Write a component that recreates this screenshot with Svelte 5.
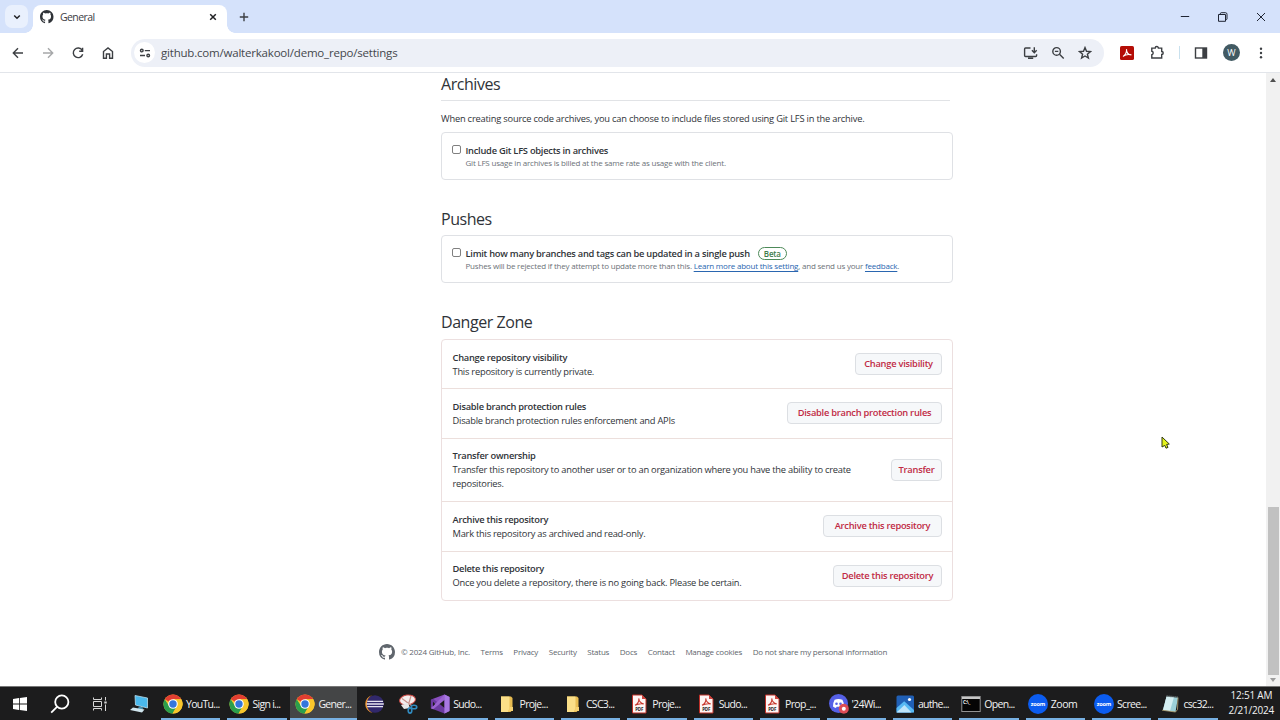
<script>
	const dangerRows = [
		{
			title: 'Change repository visibility',
			text: 'This repository is currently private.',
			button: 'Change visibility',
			width: 87,
		},
		{
			title: 'Disable branch protection rules',
			text: 'Disable branch protection rules enforcement and APIs',
			button: 'Disable branch protection rules',
			width: 155,
		},
		{
			title: 'Transfer ownership',
			text: 'Transfer this repository to another user or to an organization where you have the ability to create repositories.',
			button: 'Transfer',
			width: 51,
		},
		{
			title: 'Archive this repository',
			text: 'Mark this repository as archived and read-only.',
			button: 'Archive this repository',
			width: 119,
		},
		{
			title: 'Delete this repository',
			text: 'Once you delete a repository, there is no going back. Please be certain.',
			button: 'Delete this repository',
			width: 109,
		},
	];

	const footerLinks = [
		'Terms',
		'Privacy',
		'Security',
		'Status',
		'Docs',
		'Contact',
		'Manage cookies',
		'Do not share my personal information',
	];

	const browserTasks = [
		{ icon: 'chrome', label: 'YouTu...' },
		{ icon: 'chrome', label: 'Sign i...' },
		{ icon: 'chrome', label: 'Gener...', active: true },
	];

	const tasks = [
		{ icon: 'vs', label: 'Sudo...' },
		{ icon: 'folder', label: 'Proje...' },
		{ icon: 'folder', label: 'CSC3...' },
		{ icon: 'pdf', label: 'Proje...' },
		{ icon: 'pdf', label: 'Sudo...' },
		{ icon: 'pdf', label: 'Prop_...' },
		{ icon: 'discord', label: "'24Wi..." },
		{ icon: 'photos', label: 'authe...' },
		{ icon: 'cmd', label: 'Open...' },
		{ icon: 'zoom', label: 'Zoom' },
		{ icon: 'zoom', label: 'Scree...' },
		{ icon: 'notepad', label: 'csc32...' },
	];
</script>

{#snippet github(size)}
	<svg width={size} height={size} viewBox="0 0 16 16" fill="currentColor">
		<path
			d="M8 0c4.42 0 8 3.58 8 8a8.013 8.013 0 0 1-5.45 7.59c-.4.08-.55-.17-.55-.38 0-.27.01-1.13.01-2.2 0-.75-.25-1.23-.54-1.48 1.78-.2 3.65-.88 3.65-3.95 0-.88-.31-1.59-.82-2.15.08-.2.36-1.02-.08-2.12 0 0-.67-.22-2.2.82-.64-.18-1.32-.27-2-.27-.68 0-1.36.09-2 .27-1.53-1.03-2.2-.82-2.2-.82-.44 1.1-.16 1.92-.08 2.12-.51.56-.82 1.28-.82 2.15 0 3.06 1.86 3.75 3.64 3.95-.23.2-.44.55-.51 1.07-.46.21-1.61.55-2.33-.66-.15-.24-.6-.83-1.23-.82-.67.01-.27.38.01.53.34.19.73.9.82 1.13.16.45.68 1.31 2.69.94 0 .67.01 1.3.01 1.49 0 .21-.15.45-.55.38A7.995 7.995 0 0 1 0 8c0-4.42 3.58-8 8-8Z"
		/>
	</svg>
{/snippet}

{#snippet taskIcon(name)}
	<svg width="20" height="20" viewBox="0 0 20 20">
		{#if name === 'chrome'}
			<circle cx="10" cy="10" r="9.6" fill="#f8c62c" />
			<path d="M10 10L1.7 5.2A9.6 9.6 0 0 1 18.3 5.2L10 5.6z" fill="#e23e31" />
			<path d="M1.7 5.2A9.6 9.6 0 0 0 9.6 19.6L13.8 12.2L10 10L6.2 12.2z" fill="#2b9f4c" />
			<path d="M18.3 5.2H10L13.9 12.2L9.6 19.6A9.6 9.6 0 0 0 18.3 5.2z" fill="#f8c62c" />
			<circle cx="10" cy="10" r="4.8" fill="#fff" />
			<circle cx="10" cy="10" r="3.7" fill="#3476dc" />
		{:else if name === 'vs'}
			<path d="M14.5 0.5L19.5 3V17L14.5 19.5L1.5 8.6V5.6L3.2 4.8z" fill="#8a4fc0" />
			<path d="M14.5 19.5L0.8 14.2V5.8L3.2 4.8L14.5 14z" fill="#6b3aa0" />
			<path d="M3.2 15.2L0.8 14.2L14.5 0.5V6z" fill="#9a63d0" />
			<path d="M14.5 6L9.6 10L14.5 14zM3 7.8V12.2L5.1 10z" fill="#1c1c1d" />
			<path d="M14.5 0.5L19.5 3V17L14.5 19.5z" fill="#a878e2" />
		{:else if name === 'folder'}
			<path d="M4 2.5H14L15.5 4V16L13.5 18H4z" fill="#e9bd52" />
			<path d="M4 2.5H12.5V14L11 18H4z" fill="#fbdf88" />
			<path d="M12.5 13H16V17H12z" fill="#f6d273" />
		{:else if name === 'pdf'}
			<path d="M3.5 1H13L17 5V19H3.5z" fill="#fff5f4" stroke="#bd3029" stroke-width="1" />
			<path d="M13 1V5H17z" fill="#ca4740" />
			<path
				d="M6 11.3C8 10.3 10 7.6 9.9 4.4C9.7 7 11.8 9.5 14.7 9.9C11.5 9.4 8.5 10 6 11.3z"
				fill="none"
				stroke="#c8352c"
				stroke-width="1.1"
			/>
			<text x="10.2" y="17.2" font-size="4.4" text-anchor="middle" font-weight="700" fill="#222">PDF</text>
		{:else if name === 'discord'}
			<circle cx="9.5" cy="9.5" r="9.5" fill="#5560e6" />
			<path
				d="M5.6 5.8Q9.5 4 13.4 5.8Q15.3 9 15 12.6Q13.5 14 12 14L11.4 12.8H7.6L7 14Q5.5 14 4 12.6Q3.8 9 5.6 5.8z"
				fill="#fff"
			/>
			<circle cx="7.5" cy="9.8" r="1.3" fill="#5560e6" />
			<circle cx="11.5" cy="9.8" r="1.3" fill="#5560e6" />
			<circle cx="14.8" cy="14.8" r="5" fill="#dd4c55" />
			<circle cx="14.8" cy="14.8" r="2" fill="#fff" />
		{:else if name === 'photos'}
			<rect x="1.5" y="1.5" width="17.5" height="17" rx="1.5" fill="#205fb5" />
			<path d="M1.5 14L9.2 7.2L19 16V18.5H1.5z" fill="#58b9f4" />
			<path d="M1.5 18.5L9.4 11L16.5 18.5z" fill="#bfe5fb" />
			<circle cx="14.5" cy="5.5" r="1.6" fill="#fff" />
		{:else if name === 'cmd'}
			<rect x="0.8" y="2.5" width="18.4" height="15" fill="#050505" stroke="#929292" />
			<path d="M1 4H19" stroke="#c6c6c6" stroke-width="2" />
			<text x="2" y="10.2" font-size="4.6" font-weight="700" fill="#fff">C:\_</text>
		{:else if name === 'zoom'}
			<circle cx="10" cy="10" r="10" fill="#0b5cf0" />
			<text x="10" y="11.7" font-size="5.6" text-anchor="middle" font-weight="700" fill="#fff">zoom</text>
		{:else if name === 'notepad'}
			<path d="M6.5 2.5L18 3.5L15.5 18L3 16z" fill="#9bd0d8" />
			<path d="M6.5 2.5L14 3L10 17L3 16z" fill="#d4eef1" />
			<path d="M6.5 2L18 3.1" stroke="#626b6c" stroke-width="1.6" stroke-dasharray="1.2 .8" />
			<path d="M18 3.5L17.5 15.5L15.5 18L2 16.2" fill="none" stroke="#b6a574" stroke-width=".8" />
		{/if}
	</svg>
{/snippet}

{#snippet task(item)}
	<div class="task" class:active={item.active}>
		{@render taskIcon(item.icon)}
		<span class="task-label" class:short={item.label === 'Zoom'}>{item.label}</span>
	</div>
{/snippet}

<div class="screen">
	<div class="tab-bar">
		<div class="tab-search">
			<svg width="10" height="10" viewBox="0 0 10 10"><path d="M2.2 3.5L5 6.2L7.8 3.5" class="line bold" /></svg>
		</div>
		<div class="tab">
			{@render github(13.5)}
			<span class="tab-title">General</span>
			<svg width="10" height="10" viewBox="0 0 10 10"><path d="M2.2 2.2L7.8 7.8M7.8 2.2L2.2 7.8" class="line bold" /></svg>
		</div>
		<svg class="new-tab" width="12" height="12" viewBox="0 0 12 12"><path d="M6 1.8V10.2M1.8 6H10.2" class="line" /></svg>
		<div class="window-buttons">
			<svg width="12" height="12" viewBox="0 0 12 12"><path d="M1.8 5.5H10.2" class="line thin" /></svg>
			<svg width="12" height="12" viewBox="0 0 12 12">
				<path d="M1.5 3.5H8.5V10.3H1.5zM3.3 3.4V2.8Q3.3 1.7 4.2 1.7H8.6Q10 1.7 10 3.3V7.9Q10 8.8 8.6 8.8" class="line thin" />
			</svg>
			<svg width="12" height="12" viewBox="0 0 12 12"><path d="M2 2L10 10M10 2L2 10" class="line thin" /></svg>
		</div>
	</div>

	<div class="toolbar">
		<div class="tool">
			<svg width="14" height="14" viewBox="0 0 14 14"><path d="M12 7H2.6M7 2.3L2.3 7L7 11.7" class="line" /></svg>
		</div>
		<div class="tool disabled">
			<svg width="14" height="14" viewBox="0 0 14 14"><path d="M2 7H11.4M7 2.3L11.7 7L7 11.7" class="line" /></svg>
		</div>
		<div class="tool">
			<svg width="14" height="14" viewBox="0 0 14 14">
				<path d="M11.2 4.3A4.8 4.8 0 1 0 11.7 8.2M11.6 1.8V5.2H8.2" class="line" />
			</svg>
		</div>
		<div class="tool">
			<svg width="14" height="14" viewBox="0 0 14 14">
				<path d="M2.5 12.2V5.5L7 2L11.5 5.5V12.2H8.6V8H5.4V12.2z" class="line" />
			</svg>
		</div>
		<div class="address">
			<div class="site-info">
				<svg width="12" height="12" viewBox="0 0 12 12">
					<path d="M5.8 3.6H11M1 8.5H6" class="line" />
					<circle cx="2.8" cy="3.6" r="1.3" class="line" />
					<circle cx="9.2" cy="8.5" r="1.3" class="line" />
				</svg>
			</div>
			<span class="url">github.com/walterkakool/demo_repo/settings</span>
			<div class="address-tool">
				<svg width="15" height="14" viewBox="0 0 15 14">
					<path d="M7.5 2H2.5Q1.6 2 1.6 2.9V9.6Q1.6 10.5 2.5 10.5H12.7Q13.6 10.5 13.6 9.6V8.2M5 12.3H10.2M11.3 1.2V6.2M8.9 4.3L11.3 6.7L13.7 4.3" class="line" />
				</svg>
			</div>
			<div class="address-tool">
				<svg width="14" height="14" viewBox="0 0 14 14">
					<circle cx="5.6" cy="5.4" r="3.8" class="line" />
					<path d="M8.5 8.3L12.7 12.5M3.9 5.4H7.3" class="line" />
				</svg>
			</div>
			<div class="address-tool">
				<svg width="14" height="14" viewBox="0 0 14 14">
					<path d="M7 1.6L8.5 5.3L12.5 5.6L9.4 8.2L10.4 12.1L7 10L3.6 12.1L4.6 8.2L1.5 5.6L5.5 5.3z" class="line" />
				</svg>
			</div>
		</div>
		<div class="tool acrobat">
			<svg width="14" height="14" viewBox="0 0 14 14">
				<rect width="14" height="14" rx="1.6" fill="#b40d06" />
				<path d="M3 10.4C5.2 9.4 7 6.3 6.5 3.2C6.4 6.2 8.4 8.6 11.4 8.9C8.4 8.1 5.4 8.7 3 10.4z" fill="none" stroke="#fff" stroke-width="1.1" />
			</svg>
		</div>
		<div class="tool">
			<svg width="16" height="16" viewBox="0 0 16 16">
				<path d="M2.8 3.1H6.2A1.4 1.4 0 0 1 9.4 3.1H12.7V6.5A1.4 1.4 0 0 1 12.7 9.5V13H2.8V9.8A1.8 1.8 0 0 0 2.8 6.3z" class="line" />
			</svg>
		</div>
		<div class="divider"></div>
		<div class="tool">
			<svg width="14" height="14" viewBox="0 0 14 14">
				<rect x="1.5" y="2" width="11" height="10" class="line" />
				<path d="M8.3 2H12.5V12H8.3z" fill="#3c3f43" />
			</svg>
		</div>
		<div class="tool profile"><span class="avatar">W</span></div>
		<div class="tool">
			<svg width="14" height="14" viewBox="0 0 14 14" fill="#3c3f43">
				<circle cx="7" cy="2.7" r="1.2" /><circle cx="7" cy="7" r="1.2" /><circle cx="7" cy="11.3" r="1.2" />
			</svg>
		</div>
	</div>

	<div class="viewport">
		<div class="page">
			<div class="settings">
				<h2 class="underlined">Archives</h2>
				<p class="intro">
					When creating source code archives, you can choose to include files stored using Git LFS in the archive.
				</p>
				<div class="box option">
					<span class="checkbox"></span>
					<div>
						<div class="option-title">Include Git LFS objects in archives</div>
						<div class="note">Git LFS usage in archives is billed at the same rate as usage with the client.</div>
					</div>
				</div>

				<h2>Pushes</h2>
				<div class="box option">
					<span class="checkbox"></span>
					<div>
						<div class="option-title">
							Limit how many branches and tags can be updated in a single push
							<span class="beta">Beta</span>
						</div>
						<div class="note">
							Pushes will be rejected if they attempt to update more than this.
							<span class="link">Learn more about this setting</span>, and send us your
							<span class="link">feedback</span>.
						</div>
					</div>
				</div>

				<h2 class="danger-heading">Danger Zone</h2>
				<div class="box danger">
					{#each dangerRows as row}
						<div class="danger-row">
							<div class="danger-text">
								<strong>{row.title}</strong>
								<p>{row.text}</p>
							</div>
							<button style="width: {row.width}px">{row.button}</button>
						</div>
					{/each}
				</div>
			</div>

			<footer>
				{@render github(16)}
				<span class="copyright">© 2024 GitHub, Inc.</span>
				{#each footerLinks as link}
					<span class="footer-link">{link}</span>
				{/each}
			</footer>
		</div>
		<div class="scrollbar">
			<span class="arrow up"></span>
			<span class="thumb"></span>
			<span class="arrow down"></span>
		</div>
		<svg class="cursor" width="10" height="14" viewBox="0 0 10 14">
			<path d="M1 1L8.3 8L5.6 8.5L7 11.4L5 12.2L3.8 9.4L1 11z" fill="#e3f21b" stroke="#333b12" />
		</svg>
	</div>

	<div class="taskbar">
		<div class="system">
			<svg width="16" height="16" viewBox="0 0 16 16" fill="#fff">
				<path d="M1 3L7 2.1V7.6H1zM7.8 2L15 1V7.6H7.8zM1 8.4H7V13.9L1 13zM7.8 8.4H15V15L7.8 14z" />
			</svg>
		</div>
		<div class="system">
			<svg width="20" height="20" viewBox="0 0 20 20" fill="none" stroke="#fff" stroke-width="1.8">
				<circle cx="11.8" cy="8" r="6.6" /><path d="M7 12.8L1.2 18.6" />
			</svg>
		</div>
		<div class="system">
			<svg width="16" height="16" viewBox="0 0 16 16" fill="none" stroke="#d7d7d7">
				<path d="M1.5 1.5V3.5H9.5V1.5M1.5 14.5V12.5H9.5V14.5M1.5 5.5H9.5V10.5H1.5zM13.5 1V4.5M13.5 8.5V15" />
				<path d="M12.3 6.5H14.7" stroke-width="2" />
			</svg>
		</div>
		<div class="system computer">
			<svg width="20" height="20" viewBox="0 0 20 20">
				<path d="M6 1.5L18.5 4V14L6.5 11z" fill="#4ab9ed" stroke="#b8dcec" stroke-width=".8" />
				<path d="M10 12.5L14.5 13.5L13 16.3L8.5 15.5z" fill="#438fb0" />
				<path d="M4 13.5L15.5 15.5L13 18.5L1 16z" fill="#d0e5ed" />
			</svg>
		</div>
		{#each browserTasks as item}
			{@render task(item)}
		{/each}
		<div class="system small">
			<svg width="20" height="20" viewBox="0 0 20 20">
				<circle cx="11" cy="10" r="8.8" fill="#31286b" />
				<path d="M8.5 1A9.2 9.2 0 0 0 8.5 19A10 10 0 0 1 8.5 1z" fill="#ef9631" />
				<path d="M3.2 7.3H19M2.5 10H19.8M3.2 12.7H19" stroke="#e6e4ef" stroke-width="1.3" />
			</svg>
		</div>
		<div class="system small">
			<svg width="20" height="20" viewBox="0 0 20 20">
				<ellipse cx="9.5" cy="6" rx="8" ry="5" fill="#f4eeee" stroke="#cc4944" transform="rotate(-8 9.5 6)" />
				<path d="M4 4.5L14 12M13 2L10 12" stroke="#c9938c" stroke-width="1.2" />
				<path d="M3 11L10 9L12 14L6 15z" fill="#e8e8e8" />
				<ellipse cx="16" cy="13" rx="2.8" ry="1.8" fill="none" stroke="#318bc0" stroke-width="1.6" />
				<ellipse cx="12" cy="16.5" rx="1.8" ry="2.6" fill="none" stroke="#318bc0" stroke-width="1.6" />
			</svg>
		</div>
		{#each tasks as item}
			{@render task(item)}
		{/each}
		<div class="clock">
			<span>12:51 AM</span>
			<span>2/21/2024</span>
		</div>
	</div>
</div>

<style>
	:global(body) {
		margin: 0;
		overflow: hidden;
	}
	.screen {
		width: 1280px;
		height: 720px;
		display: flex;
		flex-direction: column;
		overflow: hidden;
		background: #fff;
		color: #2f3338;
		font-family: 'Open Sans', 'Noto Sans', sans-serif;
		font-size: 9.3px;
		letter-spacing: -0.2px;
	}
	.screen * {
		box-sizing: border-box;
	}
	svg {
		flex: none;
		display: block;
	}
	.line {
		fill: none;
		stroke: #3c3f43;
		stroke-width: 1.4;
	}
	.line.bold {
		stroke: #202124;
		stroke-width: 1.5;
	}
	.line.thin {
		stroke: #1f2533;
		stroke-width: 1;
	}

	/* browser frame */
	.tab-bar {
		height: 33px;
		flex: none;
		display: flex;
		align-items: flex-start;
		padding: 5px 0 0 5px;
		background: #d5e2fb;
	}
	.tab-search {
		width: 23px;
		height: 23px;
		border-radius: 7px;
		background: #e9f0fd;
		display: flex;
		align-items: center;
		justify-content: center;
	}
	.tab {
		position: relative;
		width: 194px;
		height: 28px;
		margin-left: 5px;
		padding: 0 9px 4px 7px;
		border-radius: 8px 8px 0 0;
		background: #fff;
		display: flex;
		align-items: center;
	}
	.tab::before,
	.tab::after {
		content: '';
		position: absolute;
		bottom: 0;
		width: 8px;
		height: 8px;
	}
	.tab::before {
		left: -8px;
		background: radial-gradient(circle at 0 0, transparent 7.5px, #fff 8px);
	}
	.tab::after {
		right: -8px;
		background: radial-gradient(circle at 100% 0, transparent 7.5px, #fff 8px);
	}
	.tab-title {
		flex: 1;
		margin-left: 6.5px;
		font-size: 10.5px;
		letter-spacing: -0.6px;
		color: #3d4045;
	}
	.new-tab {
		margin: 6px 0 0 10.5px;
	}
	.window-buttons {
		display: flex;
		gap: 26px;
		margin: 6px 13px 0 auto;
	}
	.toolbar {
		height: 40px;
		flex: none;
		display: flex;
		align-items: center;
		padding-left: 3px;
		border-bottom: 1px solid #e2e5ea;
		background: #fff;
	}
	.tool {
		width: 30px;
		flex: none;
		display: flex;
		justify-content: center;
	}
	.disabled {
		opacity: 0.45;
	}
	.address {
		width: 973px;
		height: 28px;
		margin-left: 8px;
		padding: 0 5.6px 0 3px;
		border-radius: 14px;
		background: #edf0f7;
		display: flex;
		align-items: center;
	}
	.site-info {
		width: 21px;
		height: 21px;
		border-radius: 50%;
		background: #fff;
		display: flex;
		align-items: center;
		justify-content: center;
	}
	.url {
		flex: 1;
		margin-left: 6px;
		font-size: 11.5px;
		color: #44474c;
	}
	.address-tool {
		width: 27px;
		display: flex;
		justify-content: center;
	}
	.acrobat {
		margin-left: 8px;
	}
	.divider {
		width: 1px;
		height: 13px;
		margin: 0 6.4px 0 7px;
		background: #c9e1ee;
	}
	.avatar {
		width: 17px;
		height: 17px;
		border-radius: 50%;
		background: #425a63;
		color: #fff;
		font-size: 9px;
		line-height: 17px;
		text-align: center;
	}

	/* page */
	.viewport {
		position: relative;
		height: 613px;
		flex: none;
		display: flex;
	}
	.page {
		flex: 1;
	}
	.settings {
		width: 512px;
		margin-left: 441px;
	}
	h2 {
		margin: 28px 0 5px;
		font-size: 16px;
		line-height: 22px;
		font-weight: 400;
		letter-spacing: -0.45px;
	}
	h2.underlined {
		width: 509px;
		height: 28px;
		margin: 0;
		border-bottom: 1px solid #e1e3e6;
	}
	h2.danger-heading {
		margin-bottom: 6px;
	}
	.intro {
		margin: 11px 0 6px;
		line-height: 14px;
		white-space: nowrap;
	}
	.box {
		border: 1px solid #dfe1e5;
		border-radius: 4px;
	}
	.option {
		height: 48px;
		padding: 10px 10px 0;
		display: flex;
	}
	.checkbox {
		width: 9px;
		height: 9px;
		margin: 2px 4.5px 0 0;
		border: 1px solid #808080;
		border-radius: 2px;
	}
	.option-title {
		display: flex;
		align-items: center;
		height: 14px;
		font-weight: 600;
		letter-spacing: -0.25px;
		white-space: nowrap;
	}
	.beta {
		height: 13px;
		margin-left: 8px;
		padding: 0 5px;
		border: 1px solid #4d8a59;
		border-radius: 7px;
		color: #3f7d4c;
		font-size: 8px;
		line-height: 12px;
		letter-spacing: -0.2px;
	}
	.note {
		font-size: 8px;
		line-height: 12px;
		color: #6c7278;
		white-space: nowrap;
	}
	.link {
		color: #2a66b0;
		text-decoration: underline;
		text-underline-offset: 2px;
	}
	.danger {
		border-color: #ecdfdf;
	}
	.danger-row {
		display: flex;
		align-items: center;
		justify-content: space-between;
		padding: 10.6px 10px 9.8px 10.5px;
		line-height: 14px;
	}
	.danger-row + .danger-row {
		border-top: 1px solid #ecdfdc;
	}
	.danger-text {
		flex: 1;
		max-width: 412px;
	}
	strong {
		display: block;
		font-weight: 600;
		letter-spacing: -0.25px;
	}
	.danger-text p {
		margin: 0;
		letter-spacing: -0.23px;
	}
	button {
		flex: none;
		height: 22px;
		margin: -1px 0 0;
		padding: 0;
		border: 1px solid #dcdfe3;
		border-radius: 4px;
		background: #f6f8fa;
		color: #c02a44;
		font: inherit;
		font-weight: 600;
		letter-spacing: -0.25px;
		white-space: nowrap;
	}
	footer {
		display: flex;
		align-items: center;
		margin: 43px 0 0 379px;
		color: #60666d;
		font-size: 8px;
		line-height: 16px;
		white-space: nowrap;
	}
	.copyright {
		margin-left: 6px;
	}
	.footer-link {
		margin-left: 10.6px;
		letter-spacing: -0.23px;
	}
	.scrollbar {
		width: 14px;
		display: flex;
		flex-direction: column;
		align-items: center;
		padding: 5px 0 4px;
		background: #f1f1f1;
	}
	.arrow {
		border: 3px solid transparent;
	}
	.arrow.up {
		border-top-width: 0;
		border-bottom: 4px solid #505050;
	}
	.arrow.down {
		border-bottom-width: 0;
		border-top: 4px solid #9c9c9c;
	}
	.thumb {
		width: 11px;
		height: 168px;
		margin: auto 0 3px;
		background: #c1c1c1;
	}
	.cursor {
		position: absolute;
		left: 1161px;
		top: 363px;
	}

	/* windows taskbar */
	.taskbar {
		flex: 1;
		display: flex;
		border-top: 1px solid #777;
		background: #1c1c1d;
		color: #f2f2f2;
	}
	.system {
		width: 40px;
		display: flex;
		align-items: center;
		justify-content: center;
		flex: none;
	}
	.system.computer {
		width: 38px;
	}
	.system.small {
		width: 34.2px;
	}
	.task {
		position: relative;
		width: 66.4px;
		flex: none;
		display: flex;
		align-items: center;
		padding-left: 5px;
	}
	.task::after {
		content: '';
		position: absolute;
		left: 3px;
		right: 4px;
		bottom: 0;
		height: 2px;
		background: #77b0e2;
	}
	.task.active {
		margin-left: -0.4px;
		background: #444546;
	}
	.task.active::after {
		left: 0;
		right: 0;
	}
	.task-label {
		margin-left: 3px;
		font-size: 10.5px;
		letter-spacing: -0.7px;
		white-space: nowrap;
	}
	.task-label.short {
		letter-spacing: -0.4px;
	}
	.clock {
		width: 56px;
		margin-left: 1.5px;
		display: flex;
		flex-direction: column;
		align-items: center;
		font-size: 10px;
		line-height: 15px;
		padding-top: 1px;
	}
</style>
